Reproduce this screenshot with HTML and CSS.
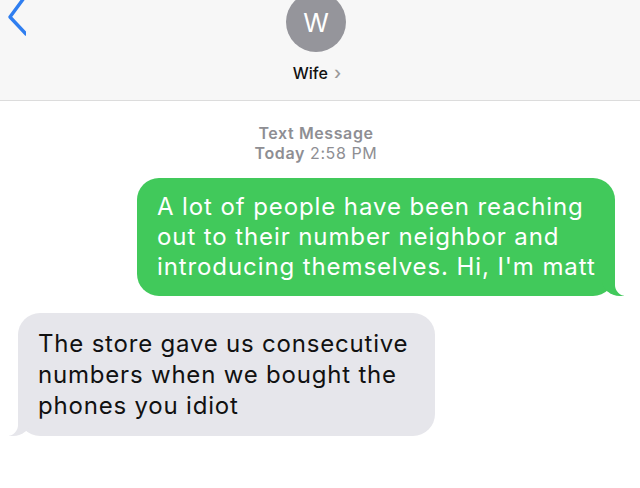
FILE: index.html
```html
<!DOCTYPE html>
<html lang="en">
<head>
    <meta charset="UTF-8">
    <title>Wife</title>
    <link rel="stylesheet" href="styles.css">
</head>
<body>
    <header class="nav">
        <div class="nav-back">
            <svg width="24" height="36" viewBox="0 0 24 36">
                <path d="M22 -2 L8 17 L24 34" fill="none" stroke="#2f7ef0" stroke-width="3.4" stroke-linecap="round" stroke-linejoin="round"/>
            </svg>
        </div>
        <div class="contact">
            <div class="avatar">W</div>
            <div class="contact-name">Wife <span class="contact-more">&#8250;</span></div>
        </div>
        <div></div>
    </header>

    <main class="thread">
        <div class="meta">
            <div><b>Text Message</b></div>
            <div><b>Today</b> 2:58 PM</div>
        </div>

        <div class="bubble out">A lot of people have been reaching<br>out to their number neighbor and<br>introducing themselves. Hi, I'm matt</div>

        <div class="bubble in">The store gave us consecutive<br>numbers when we bought the<br>phones you idiot</div>
    </main>
</body>
</html>
```

FILE: styles.css
```css
/* base */
body {
    margin: 0;
    background: #ffffff;
    font-family: 'Inter', 'Liberation Sans', Arial, sans-serif;
    width: 640px;
    height: 488px;
    overflow: hidden;
}

/* top bar */
.nav {
    display: grid;
    grid-template-columns: 1fr auto 1fr;
    height: 100px;
    background: #f7f7f7;
    border-bottom: 1px solid #dcdcdc;
}

.nav-back {
    padding-left: 2px;
}

.contact {
    display: flex;
    flex-direction: column;
    align-items: center;
    margin-left: -8px;
}

.avatar {
    width: 60px;
    height: 60px;
    margin-top: -8px;
    border-radius: 50%;
    background: #95959b;
    color: #fff;
    font-size: 26px;
    display: flex;
    align-items: center;
    justify-content: center;
}

.contact-name {
    margin-top: 10px;
    font-size: 16px;
    font-weight: 500;
    color: #111;
    margin-left: 2px;
}

.contact-more {
    color: #9a9a9a;
    font-size: 18px;
    margin-left: 2px;
}

/* thread */
.thread {
    display: flex;
    flex-direction: column;
}

.meta {
    text-align: center;
    color: #8e8e93;
    font-size: 16px;
    letter-spacing: 0.6px;
    line-height: 20px;
    margin: 22px 0 0 -8px;
}

.meta b {
    font-weight: 600;
}

.bubble {
    position: relative;
    font-size: 24px;
    letter-spacing: 0.9px;
    line-height: 30px;
    white-space: nowrap;
    border-radius: 22px;
    padding: 14px 20px;
}

.out {
    align-self: flex-end;
    margin: 15px 25px 0 0;
    width: 438px;
    background: #41c95b;
    color: #fff;
}

.in {
    align-self: flex-start;
    margin: 17px 0 0 18px;
    width: 377px;
    line-height: 31px;
    letter-spacing: 0.8px;
    padding: 15px 20px;
    background: #e6e6eb;
    color: #111;
}

/* bubble tails */
.out::before,
.in::before {
    content: "";
    position: absolute;
    bottom: 0;
    height: 22px;
    width: 22px;
}

.out::before {
    right: -9px;
    background: #41c95b;
    border-bottom-left-radius: 18px 16px;
}

.in::before {
    left: -9px;
    background: #e6e6eb;
    border-bottom-right-radius: 18px 16px;
}

.out::after,
.in::after {
    content: "";
    position: absolute;
    bottom: 0;
    height: 22px;
    width: 26px;
    background: #fff;
}

.out::after {
    right: -26px;
    border-bottom-left-radius: 11px;
}

.in::after {
    left: -26px;
    border-bottom-right-radius: 11px;
}
```
